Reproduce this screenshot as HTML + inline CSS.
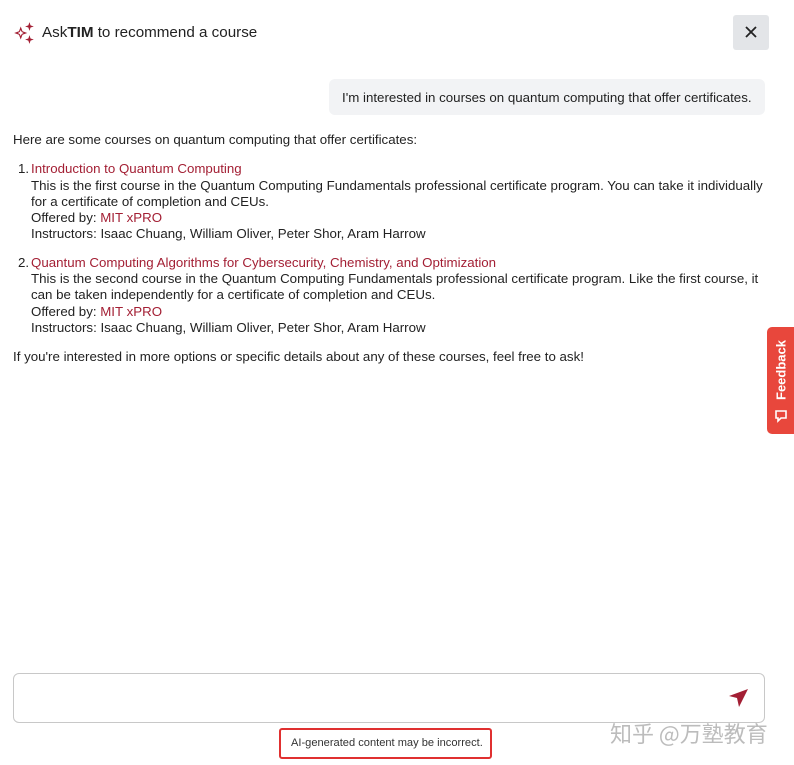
<!DOCTYPE html>
<html><head><meta charset="utf-8"><style>
body{margin:0;width:794px;height:765px;background:#fff;font-family:"Liberation Sans",Arial,sans-serif;color:#222;position:relative;overflow:hidden;font-size:13.3px}
.a{position:absolute}
.r{color:#a31f34}
p{margin:0}
</style></head><body>
<svg class="a" style="left:12px;top:21px" width="24" height="24" viewBox="0 0 22 22"><path fill="#a31f34" d="M8 5 L9.6 9.4 L14 11 L9.6 12.6 L8 17 L6.4 12.6 L2 11 L6.4 9.4Z M8 8.3 L8.9 10.1 L10.7 11 L8.9 11.9 L8 13.7 L7.1 11.9 L5.3 11 L7.1 10.1Z" fill-rule="evenodd"/><path fill="#a31f34" d="M16 1 L17 4 L20 5 L17 6 L16 9 L15 6 L12 5 L15 4Z M16 13 L17 16 L20 17 L17 18 L16 21 L15 18 L12 17 L15 16Z"/></svg>
<div class="a" style="left:42px;top:24px;font-size:15.2px;color:#222">Ask<b>TIM</b> to recommend a course</div>
<div class="a" style="left:733px;top:15px;width:36px;height:35px;background:#e3e5e8;border-radius:3px"><svg width="36" height="35"><path d="M13 12L23 22M23 12L13 22" stroke="#222" stroke-width="1.8"/></svg></div>
<div class="a" style="left:329px;top:79px;width:436px;height:36px;background:#f2f3f5;border-radius:6px"></div>
<div class="a" style="left:342px;top:90px">I'm interested in courses on quantum computing that offer certificates.</div>
<div class="a" style="left:13px;top:132px;line-height:16.3px;width:764px">
<p>Here are some courses on quantum computing that offer certificates:</p>
<div style="margin-top:13px;position:relative;padding-left:18px"><span class="a" style="left:5px">1.</span>
<p class="r">Introduction to Quantum Computing</p>
<p>This is the first course in the Quantum Computing Fundamentals professional certificate program. You can take it individually for a certificate of completion and CEUs.</p>
<p>Offered by: <span class="r">MIT xPRO</span></p>
<p>Instructors: Isaac Chuang, William Oliver, Peter Shor, Aram Harrow</p></div>
<div style="margin-top:12px;position:relative;padding-left:18px"><span class="a" style="left:5px">2.</span>
<p class="r">Quantum Computing Algorithms for Cybersecurity, Chemistry, and Optimization</p>
<p>This is the second course in the Quantum Computing Fundamentals professional certificate program. Like the first course, it can be taken independently for a certificate of completion and CEUs.</p>
<p>Offered by: <span class="r">MIT xPRO</span></p>
<p>Instructors: Isaac Chuang, William Oliver, Peter Shor, Aram Harrow</p></div>
<p style="margin-top:13px">If you're interested in more options or specific details about any of these courses, feel free to ask!</p>
</div>
<div class="a" style="left:767px;top:327px;width:30px;height:107px;background:#e8473c;border-radius:5px 0 0 5px"></div>
<div class="a" style="left:781px;top:370px;transform:translate(-50%,-50%) rotate(-90deg);color:#fff;font-weight:bold;font-size:13px;white-space:nowrap">Feedback</div>
<svg class="a" style="left:774px;top:409px" width="14" height="14"><path d="M2 2H12V9H7L4 12V9H2Z" fill="none" stroke="#fff" stroke-width="1.6"/></svg>
<div class="a" style="left:13px;top:673px;width:750px;height:48px;border:1px solid #c8c8c8;border-radius:6px"></div>
<svg class="a" style="left:728px;top:688px" width="22" height="20" viewBox="0 0 22 20"><path d="M20 1L1 8L9 10L11 19Z" fill="#a31f34"/></svg>
<div class="a" style="left:610px;top:717px;font-family:'Noto Sans CJK SC',sans-serif;font-size:22px;color:rgba(160,160,160,0.7);white-space:nowrap">知乎 @万塾教育</div>
<div class="a" style="left:279px;top:728px;width:209px;height:27px;border:2.5px solid #e03030;border-radius:3px"></div>
<div class="a" style="left:291px;top:737px;font-size:11.1px;color:#333">AI-generated content may be incorrect.</div>
</body></html>
